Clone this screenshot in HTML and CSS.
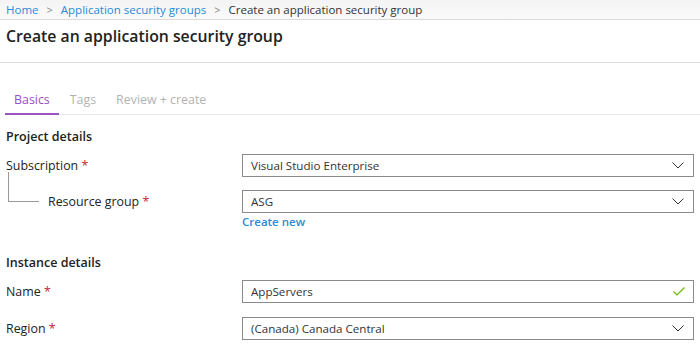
FILE: index.html
```html
<!DOCTYPE html>
<html>
<head>
<meta charset="utf-8">
<link rel="stylesheet" href="styles.css">
</head>
<body>
<div class="crumbs">
  <a class="crumb-link">Home</a>
  <span class="sep">&gt;</span>
  <a class="crumb-link">Application security groups</a>
  <span class="sep">&gt;</span>
  <span class="crumb-cur">Create an application security group</span>
</div>
<div class="titlebar"><h1 class="title">Create an application security group</h1></div>
<div class="tabs">
  <div class="tab active">Basics</div>
  <div class="tab">Tags</div>
  <div class="tab">Review + create</div>
</div>
<div class="form">
  <h2 class="section">Project details</h2>
  <div class="row">
    <div class="label">Subscription <span class="req">*</span></div>
    <div class="field"><div class="input"><span>Visual Studio Enterprise</span><svg class="chev" viewBox="0 0 12 7" width="12" height="7"><path d="M0.5 0.5 L6 6 L11.5 0.5" fill="none" stroke="#333" stroke-width="1"/></svg></div></div>
  </div>
  <div class="row row-sub">
    <div class="label label-sub"><span class="tree"></span>Resource group <span class="req">*</span></div>
    <div class="field"><div class="input"><span>ASG</span><svg class="chev" viewBox="0 0 12 7" width="12" height="7"><path d="M0.5 0.5 L6 6 L11.5 0.5" fill="none" stroke="#333" stroke-width="1"/></svg></div>
    <a class="create">Create new</a></div>
  </div>
  <h2 class="section section2">Instance details</h2>
  <div class="row">
    <div class="label">Name <span class="req">*</span></div>
    <div class="field"><div class="input"><span>AppServers</span><svg class="check" viewBox="0 0 12 9" width="12" height="9"><path d="M0.5 4.5 L4 8 L11.5 0.5" fill="none" stroke="#6bb700" stroke-width="1.2"/></svg></div></div>
  </div>
  <div class="row row-region">
    <div class="label">Region <span class="req">*</span></div>
    <div class="field"><div class="input"><span>(Canada) Canada Central</span><svg class="chev" viewBox="0 0 12 7" width="12" height="7"><path d="M0.5 0.5 L6 6 L11.5 0.5" fill="none" stroke="#333" stroke-width="1"/></svg></div></div>
  </div>
</div>
</body>
</html>
```
FILE: styles.css
```css
body {
  margin: 0;
  font-family: "Open Sans", "Noto Sans", sans-serif;
  color: #323130;
  background: #fff;
}
.crumbs {
  height: 19px;
  display: flex;
  align-items: center;
  padding-left: 6px;
  font-size: 11.5px;
  border-bottom: 1px solid #dadada;
  background: linear-gradient(#f4f4f4, #fafafa);
  white-space: nowrap;
}
.crumb-link { color: #2a8ad9; }
.sep { color: #888; margin: 0 8px; font-size: 11px; }
.crumb-cur { color: #333; }
.titlebar {
  height: 42px;
  border-bottom: 1px solid #e1e1e1;
  padding-left: 6px;
}
.title {
  margin: 0;
  padding-top: 5px;
  font-size: 15.8px;
  font-weight: 600;
  color: #222;
  line-height: 22px;
}
.tabs {
  display: flex;
  margin-top: 28px;
  margin-left: 5px;
  border-bottom: 1px solid #e6e6e6;
}
.tab {
  font-size: 12.4px;
  color: #b3b3b3;
  padding: 0 9px 5px 9px;
  margin-right: 2px;
  line-height: 17px;
}
.tab.active {
  color: #9b4fc2;
  border-bottom: 2px solid #9b55c1;
  margin-bottom: -1px;
}
.form { padding-left: 6px; padding-right: 6px; }
.section {
  margin: 12px 0 0 0;
  font-size: 12.5px;
  font-weight: 600;
  color: #222;
  line-height: 20px;
}
.section2 { margin-top: 23px; }
.row {
  display: flex;
  align-items: flex-start;
  margin-top: 7px;
}
.row-sub { margin-top: 13px; }
.row-region { margin-top: 14px; }
.label {
  width: 236px;
  font-size: 12.4px;
  line-height: 23px;
  color: #222;
  flex: none;
}
.label-sub {
  position: relative;
  padding-left: 42px;
  width: 194px;
}
.tree {
  position: absolute;
  left: 2px;
  top: -18px;
  width: 30px;
  height: 29px;
  border-left: 1px solid #999;
  border-bottom: 1px solid #999;
}
.req { color: #c4262e; }
.field { flex: 1; }
.input {
  height: 21px;
  border: 1px solid #8a8a8a;
  display: flex;
  align-items: center;
  justify-content: space-between;
  padding: 0 8px 0 8px;
  font-size: 11.6px;
  color: #333;
}
.chev { margin-right: 1px; }
.create {
  display: block;
  color: #2a8ad9;
  font-weight: 600;
  font-size: 11.5px;
  line-height: 17px;
}
```
